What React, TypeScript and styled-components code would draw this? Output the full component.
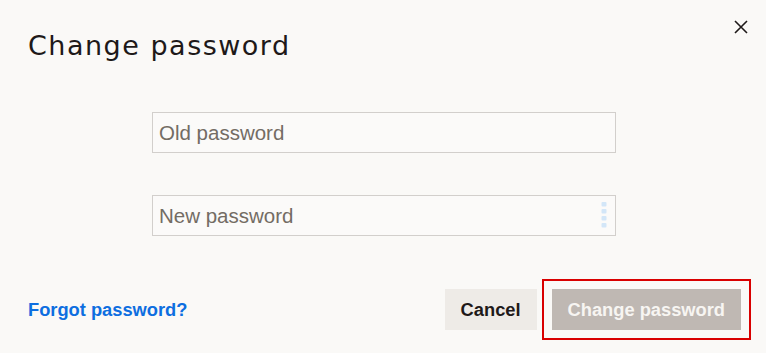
import React, { FC } from 'react';
import styled, { createGlobalStyle } from 'styled-components';

const GlobalStyle = createGlobalStyle`
  html, body {
    margin: 0;
    padding: 0;
    background: #faf9f7;
  }
  body {
    font-family: "Liberation Sans", Arial, sans-serif;
    color: #1e1919;
  }
`;

const Dialog = styled.div`
  width: 766px;
  height: 353px;
  box-sizing: border-box;
  display: flex;
  flex-direction: column;
  background: #faf9f7;
`;

const Header = styled.div`
  display: flex;
  justify-content: space-between;
  align-items: flex-start;
  padding: 29px 18px 0 28px;
`;

const Title = styled.h1`
  margin: 0;
  font-family: "DejaVu Sans", "Liberation Sans", sans-serif;
  font-size: 27px;
  line-height: 33px;
  font-weight: 400;
  letter-spacing: 1.5px;
  color: #1e1919;
`;

const CloseButton = styled.button`
  width: 14px;
  height: 14px;
  margin-top: -9px;
  padding: 0;
  border: none;
  background: none;
  display: flex;
  cursor: pointer;
`;

const Form = styled.div`
  display: flex;
  flex-direction: column;
  align-items: center;
  gap: 42px;
  margin-top: 50px;
  padding-left: 2px;
`;

const Field = styled.div`
  position: relative;
  width: 464px;
`;

const Input = styled.input`
  width: 100%;
  height: 41px;
  box-sizing: border-box;
  border: 1px solid #d2cfcc;
  background: #fbfaf9;
  padding: 0 6px;
  font-family: "Liberation Sans", Arial, sans-serif;
  font-size: 20.5px;
  color: #1e1919;
  outline: none;
  &::placeholder {
    color: #736c64;
  }
`;

const ManagerIcon = styled.span`
  position: absolute;
  right: 9px;
  top: 7px;
  display: flex;
`;

const Footer = styled.div`
  display: flex;
  align-items: center;
  justify-content: space-between;
  margin-top: 53px;
  padding: 0 25px 0 28px;
`;

const Link = styled.a`
  font-size: 18.3px;
  font-weight: 700;
  color: #0d6ee0;
  text-decoration: none;
`;

const Actions = styled.div`
  display: flex;
  gap: 15px;
`;

const Button = styled.button<{ $primary?: boolean }>`
  height: 41px;
  padding: 0 16px;
  border: none;
  font-family: "Liberation Sans", Arial, sans-serif;
  font-size: 18.3px;
  font-weight: 700;
  background: ${({ $primary }) => ($primary ? '#bfb8b3' : '#eeebe7')};
  color: ${({ $primary }) => ($primary ? '#f7f5f2' : '#1e1919')};
  outline: ${({ $primary }) => ($primary ? '2px solid #d90000' : 'none')};
  outline-offset: 8px;
`;

const App: FC = () => (
  <Dialog>
    <GlobalStyle />
    <Header>
      <Title>Change password</Title>
      <CloseButton aria-label="Close">
        <svg width="14" height="14" viewBox="0 0 14 14">
          <path d="M1 1L13 13M13 1L1 13" stroke="#1e1919" strokeWidth="1.6" />
        </svg>
      </CloseButton>
    </Header>
    <Form>
      <Field>
        <Input type="password" placeholder="Old password" />
      </Field>
      <Field>
        <Input type="password" placeholder="New password" />
        <ManagerIcon>
          <svg width="6" height="26" viewBox="0 0 6 26">
            {[0, 7, 14, 21].map((y) => (
              <rect key={y} x="0.5" y={y} width="5" height="4.5" rx="1" fill="#d3e6f8" />
            ))}
          </svg>
        </ManagerIcon>
      </Field>
    </Form>
    <Footer>
      <Link href="#">Forgot password?</Link>
      <Actions>
        <Button>Cancel</Button>
        <Button $primary disabled>Change password</Button>
      </Actions>
    </Footer>
  </Dialog>
);

export default App;
